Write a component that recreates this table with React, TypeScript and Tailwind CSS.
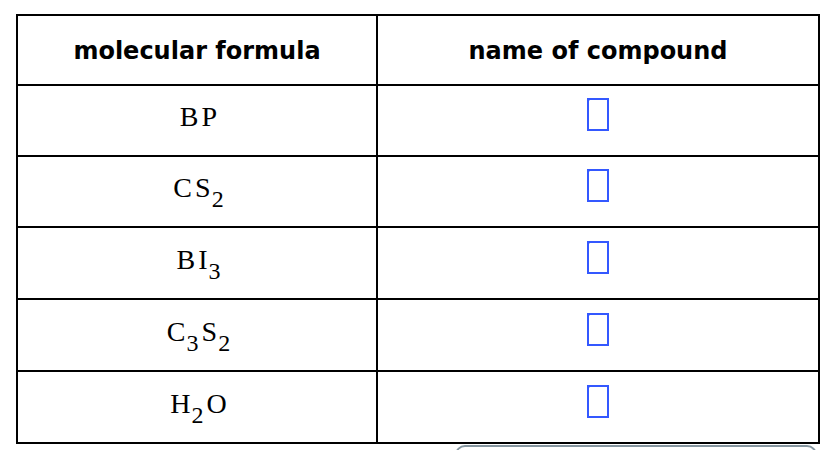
import React from "react";

type Part = { t: string; sub?: boolean };

const rows: Part[][] = [
  [{ t: "B" }, { t: "P" }],
  [{ t: "C" }, { t: "S" }, { t: "2", sub: true }],
  [{ t: "B" }, { t: "I" }, { t: "3", sub: true }],
  [{ t: "C" }, { t: "3", sub: true }, { t: "S" }, { t: "2", sub: true }],
  [{ t: "H" }, { t: "2", sub: true }, { t: "O" }],
];

const heights = ["h-[71px]", "h-[71px]", "h-[72px]", "h-[72px]", "h-[72px]"];

function Formula({ parts }: { parts: Part[] }) {
  return (
    <span className="mb-[7px] font-['Liberation_Serif',serif] text-[28px] leading-none text-black">
      {parts.map((p, i) =>
        p.sub ? (
          <span key={i} className="relative top-[10px] ml-[1px] text-[24px]">
            {p.t}
          </span>
        ) : (
          <span key={i} className="ml-[3px]">
            {p.t}
          </span>
        )
      )}
    </span>
  );
}

function AnswerBox() {
  return (
    <div className="relative -mt-[12px] h-[33px] w-[22px] border-2 border-[#3458ff]">
      <div className="absolute -left-[2px] -top-[2px] h-[3px] w-[3px] rounded-full bg-[#3458ff] opacity-60"></div>
    </div>
  );
}

export default function App() {
  return (
    <div className="relative h-[450px] w-[838px] overflow-hidden bg-white">
      <div className="ml-[16px] mt-[14px] w-[804px] border-2 border-black">
        <div className="flex h-[68px] font-['DejaVu_Sans',sans-serif] text-[24px] font-bold text-black">
          <div className="flex w-[360px] items-center justify-center border-r-2 border-black pt-[2px]">
            molecular formula
          </div>
          <div className="flex flex-1 items-center justify-center pt-[2px]">name of compound</div>
        </div>
        {rows.map((r, i) => (
          <div key={i} className={`flex border-t-2 border-black ${heights[i]}`}>
            <div className="flex w-[360px] items-center justify-center border-r-2 border-black">
              <Formula parts={r} />
            </div>
            <div className="flex flex-1 items-center justify-center">
              <AnswerBox />
            </div>
          </div>
        ))}
      </div>
      <div className="ml-[455px] mt-[1px] h-[20px] w-[362px] rounded-t-[10px] border-2 border-b-0 border-[#8596a0]"></div>
    </div>
  );
}
